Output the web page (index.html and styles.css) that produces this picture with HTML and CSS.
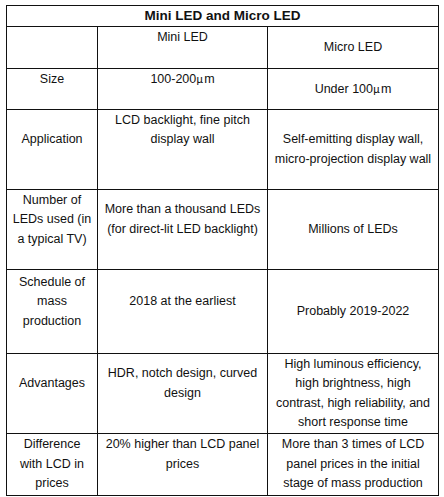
FILE: index.html
```html
<!DOCTYPE html>
<html lang="en">
<head>
<meta charset="utf-8">
<title>Mini LED and Micro LED</title>
<link rel="stylesheet" href="styles.css">
</head>
<body>
<table class="cmp">
  <colgroup>
    <col class="col-label">
    <col class="col-mini">
    <col class="col-micro">
  </colgroup>
  <tr class="r-title"><th colspan="3">Mini LED and Micro LED</th></tr>
  <tr class="r-head">
    <td></td>
    <td class="tail1">Mini LED</td>
    <td>Micro LED</td>
  </tr>
  <tr class="r-size">
    <td class="tail1">Size</td>
    <td class="tail1">100-200<span class="mu">μ</span>m</td>
    <td>Under 100<span class="mu">μ</span>m</td>
  </tr>
  <tr class="r-app">
    <td class="tail1">Application</td>
    <td class="tail2">LCD backlight, fine pitch display wall</td>
    <td>Self-emitting display wall, micro-projection display wall</td>
  </tr>
  <tr class="r-num">
    <td class="tail1">Number of LEDs used (in a typical TV)</td>
    <td class="tail1">More than a thousand LEDs (for direct-lit LED backlight)</td>
    <td>Millions of LEDs</td>
  </tr>
  <tr class="r-sched">
    <td class="tail1">Schedule of mass production</td>
    <td class="tail1">2018 at the earliest</td>
    <td>Probably 2019-2022</td>
  </tr>
  <tr class="r-adv">
    <td class="tail1">Advantages</td>
    <td class="tail1">HDR, notch design, curved design</td>
    <td>High luminous efficiency, high brightness, high contrast, high reliability, and short response time</td>
  </tr>
  <tr class="r-diff">
    <td>Difference with LCD in prices</td>
    <td class="tail1">20% higher than LCD panel prices</td>
    <td>More than 3 times of LCD panel prices in the initial stage of mass production</td>
  </tr>
</table>
</body>
</html>
```
FILE: styles.css
```css
html, body {
  margin: 0;
  padding: 0;
  background: #ffffff;
}

.cmp {
  margin: 5px 0 0 6px;
  width: 432px;
  table-layout: fixed;
  border-collapse: collapse;
  font-family: "Liberation Sans", Arial, sans-serif;
  font-size: 12.5px;
  line-height: 19.5px;
  color: #111111;
}

.col-label { width: 91px; }
.col-mini { width: 170px; }
.col-micro { width: 171px; }

.cmp th,
.cmp td {
  border: 1px solid #111111;
  padding: 0 5px;
  text-align: center;
  vertical-align: middle;
}

.cmp th {
  font-size: 13.5px;
  font-weight: bold;
}

.cmp td.tail1 { padding-bottom: 19.5px; }
.cmp td.tail2 { padding-bottom: 39px; }

.mu {
  font-family: "Noto Sans CJK SC", "DejaVu Sans", sans-serif;
  font-size: 11px;
  margin-right: 1px;
}

.r-title { height: 21px; }
.r-head { height: 42px; }
.r-size { height: 40px; }
.r-app { height: 80px; }
.r-num { height: 80px; }
.r-sched { height: 84px; }
.r-adv { height: 80px; }
.r-diff { height: 62px; }
```
